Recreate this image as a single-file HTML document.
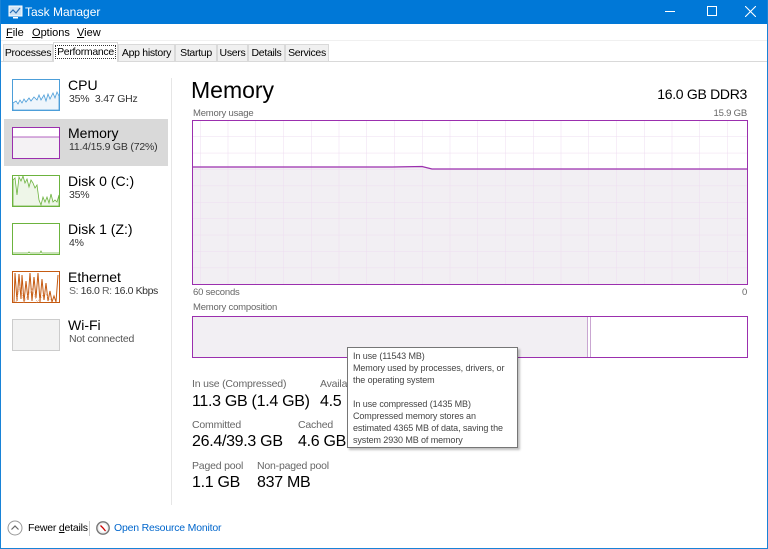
<!DOCTYPE html>
<html><head><meta charset="utf-8"><style>
*{margin:0;padding:0;box-sizing:border-box}
body{width:768px;height:549px;overflow:hidden;background:#fff;font-family:"Liberation Sans",sans-serif;position:relative;color:#000}
.a{position:absolute;white-space:nowrap}
.frame{position:absolute;left:0;top:0;width:768px;height:549px;border:1px solid #1883d7;border-top:none}
.title{position:absolute;left:0;top:0;width:768px;height:24px;background:#0078d7;color:#fff;font-size:12px}
.tab{position:absolute;top:44px;height:17px;font-size:10.5px;letter-spacing:-0.3px;line-height:16px;text-align:center;border:1px solid #d9d9d9;border-bottom:none;background:#f0f0f0;color:#000;white-space:nowrap}
.nm{font-size:14px;color:#000}
.sb{font-size:10.5px;color:#333;letter-spacing:-0.2px}
.lbl{font-size:10.5px;color:#666;letter-spacing:-0.2px}
.big{font-size:16px;color:#000;letter-spacing:-0.3px}
</style></head><body>
<div class="title">
<svg class="a" style="left:8px;top:5px" width="15" height="14"><rect x="1" y="1" width="13" height="10" fill="#cfe3f4" stroke="#fff"/><polyline points="2,8 5,5 8,8 12,3" fill="none" stroke="#2a6fb5" stroke-width="1.2"/><rect x="5" y="12" width="5" height="1.5" fill="#fff"/></svg>
<div class="a" style="left:25px;top:5px">Task Manager</div>
<div class="a" style="left:665px;top:11px;width:10px;height:1px;background:#fff"></div>
<div class="a" style="left:707px;top:6px;width:10px;height:10px;border:1px solid #fff"></div>
<svg class="a" style="left:745px;top:6px" width="11" height="11"><path d="M0 0L11 11M11 0L0 11" stroke="#fff" stroke-width="1.1"/></svg>
</div>
<div class="a" style="left:6px;top:27px;font-size:11px"><u>F</u>ile</div>
<div class="a" style="left:32px;top:27px;font-size:11px"><u>O</u>ptions</div>
<div class="a" style="left:77px;top:27px;font-size:11px"><u>V</u>iew</div>
<div class="a" style="left:0;top:40px;width:768px;height:1px;background:#f0f0f0"></div>
<div class="a" style="left:1px;top:61px;width:766px;height:1px;background:#d9d9d9"></div>
<div class="tab" style="left:3px;width:50px">Processes</div>
<div class="tab" style="left:53px;top:42px;height:20px;width:65px;background:#fff;border-color:#d9d9d9;line-height:18px"><span style="border:1px dotted #333;padding:0 1px">Performance</span></div>
<div class="tab" style="left:118px;width:57px">App history</div>
<div class="tab" style="left:175px;width:42px">Startup</div>
<div class="tab" style="left:217px;width:31px">Users</div>
<div class="tab" style="left:248px;width:37px">Details</div>
<div class="tab" style="left:285px;width:44px">Services</div>

<!-- sidebar -->
<div class="a" style="left:4px;top:119px;width:164px;height:47px;background:#d9d9d9"></div>
<div class="a" style="left:171px;top:78px;width:1px;height:427px;background:#e6e6e6"></div>
<svg class="a" style="left:12px;top:79px" width="48" height="32"><rect x=".5" y=".5" width="47" height="31" fill="#fff" stroke="#4c9ed9"/><path d="M1 24L4 22 6 25 8 21 10 24 12 20 14 23 17 19 19 22 22 18 25 21 27 16 29 21 32 16 34 22 36 15 38 20 41 14 43 19 45 13 47 17V31H1Z" fill="#eef5fb" stroke="#4c9ed9" stroke-width=".8"/></svg>
<div class="a nm" style="left:68px;top:77px">CPU</div>
<div class="a sb" style="left:69px;top:93px">35%&nbsp; 3.47 GHz</div>
<svg class="a" style="left:12px;top:127px" width="48" height="32"><rect x=".5" y=".5" width="47" height="31" fill="#f4f2f4" stroke="#9b2fae"/><rect x="1" y="1" width="46" height="9" fill="#fff"/><path d="M1 10H47" stroke="#9b2fae" stroke-width=".8"/></svg>
<div class="a nm" style="left:68px;top:125px">Memory</div>
<div class="a sb" style="left:69px;top:141px">11.4/15.9 GB (72%)</div>
<svg class="a" style="left:12px;top:175px" width="48" height="32"><rect x=".5" y=".5" width="47" height="31" fill="#fff" stroke="#6cb33e"/><path d="M1 31V5L3 3 5 20 7 2 9 6 11 1 13 8 15 4 17 12 19 5 21 8 23 13 25 10 27 25 29 30 31 22 33 27 35 22 37 28 39 19 41 27 43 25 45 27 47 20V31Z" fill="#eef6e8" stroke="#6cb33e" stroke-width=".8"/></svg>
<div class="a nm" style="left:68px;top:173px">Disk 0 (C:)</div>
<div class="a sb" style="left:69px;top:189px">35%</div>
<svg class="a" style="left:12px;top:223px" width="48" height="32"><rect x=".5" y=".5" width="47" height="31" fill="#fff" stroke="#6cb33e"/><path d="M1 30H16L17 29 18 30H28L29 28 30 30H47" fill="none" stroke="#6cb33e" stroke-width=".8"/></svg>
<div class="a nm" style="left:68px;top:221px">Disk 1 (Z:)</div>
<div class="a sb" style="left:69px;top:237px">4%</div>
<svg class="a" style="left:12px;top:271px" width="48" height="32"><rect x=".5" y=".5" width="47" height="31" fill="#fff" stroke="#c55a11"/><path d="M2 31L3 2 5 30 7 3 9 28 10 4 12 31 14 10 16 29 18 2 20 30 22 6 24 27 26 2 28 31 30 8 32 29 34 12 36 30 38 20 40 31 42 25 44 31 46 4" fill="none" stroke="#c55a11" stroke-width="1"/><path d="M4 31L8 15 12 31 20 18 25 31 33 22 40 31" fill="none" stroke="#e0a078" stroke-width=".8" stroke-dasharray="1 1"/></svg>
<div class="a nm" style="left:68px;top:269px">Ethernet</div>
<div class="a sb" style="left:69px;top:285px;letter-spacing:-0.4px"><span style="color:#666">S:</span> 16.0 <span style="color:#666">R:</span> 16.0 Kbps</div>
<div class="a" style="left:12px;top:319px;width:48px;height:32px;background:#f2f2f2;border:1px solid #ccc"></div>
<div class="a nm" style="left:68px;top:317px">Wi-Fi</div>
<div class="a sb" style="left:69px;top:333px;color:#555">Not connected</div>

<!-- main -->
<div class="a" style="left:191px;top:77px;font-size:23px">Memory</div>
<div class="a" style="right:21px;top:86px;font-size:14px;letter-spacing:-0.3px">16.0 GB DDR3</div>
<div class="a lbl" style="left:193px;top:108px;font-size:9.5px">Memory usage</div>
<div class="a lbl" style="right:21px;top:108px;font-size:9.5px">15.9 GB</div>
<svg class="a" style="left:192px;top:120px" width="556" height="165">
<defs><pattern id="g" width="27.75" height="16.4" patternUnits="userSpaceOnUse" x="8"><path d="M0 0V17M0 0H28" stroke="#eedcf0" stroke-width="1" fill="none"/></pattern></defs>
<rect x="0" y="0" width="556" height="165" fill="#fff"/>
<path d="M1 47H230L240 49H350L356 49H555V164H1Z" fill="#f2eff3"/>
<rect x="1" y="1" width="554" height="163" fill="url(#g)"/>
<path d="M1 47H200L230 46.5 240 49H350L356 49H555" fill="none" stroke="#9b2fae" stroke-width="1.2"/>
<rect x=".5" y=".5" width="555" height="164" fill="none" stroke="#9b2fae"/>
</svg>
<div class="a lbl" style="left:193px;top:287px;font-size:9.5px">60 seconds</div>
<div class="a lbl" style="left:742px;top:287px;font-size:9.5px">0</div>
<div class="a lbl" style="left:193px;top:302px;font-size:9.5px">Memory composition</div>
<svg class="a" style="left:192px;top:316px" width="556" height="42"><rect x="1" y="1" width="395" height="40" fill="#f2eff3"/><path d="M395.5 1V41M398.5 1V41" stroke="#c9a6d1"/><rect x=".5" y=".5" width="555" height="41" fill="none" stroke="#9b2fae"/></svg>

<div class="a lbl" style="left:192px;top:378px">In use (Compressed)</div>
<div class="a big" style="left:192px;top:393px">11.3 GB (1.4 GB)</div>
<div class="a lbl" style="left:320px;top:378px">Availa</div>
<div class="a big" style="left:320px;top:393px">4.5</div>
<div class="a lbl" style="left:192px;top:419px">Committed</div>
<div class="a big" style="left:192px;top:433px">26.4/39.3 GB</div>
<div class="a lbl" style="left:298px;top:419px">Cached</div>
<div class="a big" style="left:298px;top:433px">4.6 GB</div>
<div class="a lbl" style="left:192px;top:460px">Paged pool</div>
<div class="a big" style="left:192px;top:474px">1.1 GB</div>
<div class="a lbl" style="left:257px;top:460px">Non-paged pool</div>
<div class="a big" style="left:257px;top:474px">837 MB</div>

<div class="a" style="left:347px;top:347px;width:171px;height:101px;background:#fff;border:1px solid #767676;box-shadow:2px 2px 2px rgba(0,0,0,.25);font-size:9px;letter-spacing:-0.1px;color:#444;line-height:12px;padding:2px 0 0 5px;white-space:normal">In use (11543 MB)<br>Memory used by processes, drivers, or<br>the operating system<br><br>In use compressed (1435 MB)<br>Compressed memory stores an<br>estimated 4365 MB of data, saving the<br>system 2930 MB of memory</div>

<!-- footer -->
<svg class="a" style="left:7px;top:520px" width="16" height="16"><circle cx="8" cy="8" r="7" fill="#fff" stroke="#999"/><path d="M4.5 9.5L8 6 11.5 9.5" fill="none" stroke="#666" stroke-width="1.2"/></svg>
<div class="a" style="left:28px;top:522px;font-size:10.5px;letter-spacing:-0.2px">Fewer <u>d</u>etails</div>
<div class="a" style="left:89px;top:521px;width:1px;height:15px;background:#ccc"></div>
<svg class="a" style="left:96px;top:521px" width="14" height="14"><circle cx="7" cy="7" r="6.2" fill="#eee" stroke="#777" stroke-width="1.4"/><circle cx="7" cy="7" r="4" fill="#fff"/><path d="M4.5 4.5L7 7 9.5 10" stroke="#c00" stroke-width="1.3"/></svg>
<div class="a" style="left:114px;top:522px;font-size:10.5px;letter-spacing:-0.2px;color:#0066cc">Open Resource Monitor</div>
<div class="frame"></div>
</body></html>
